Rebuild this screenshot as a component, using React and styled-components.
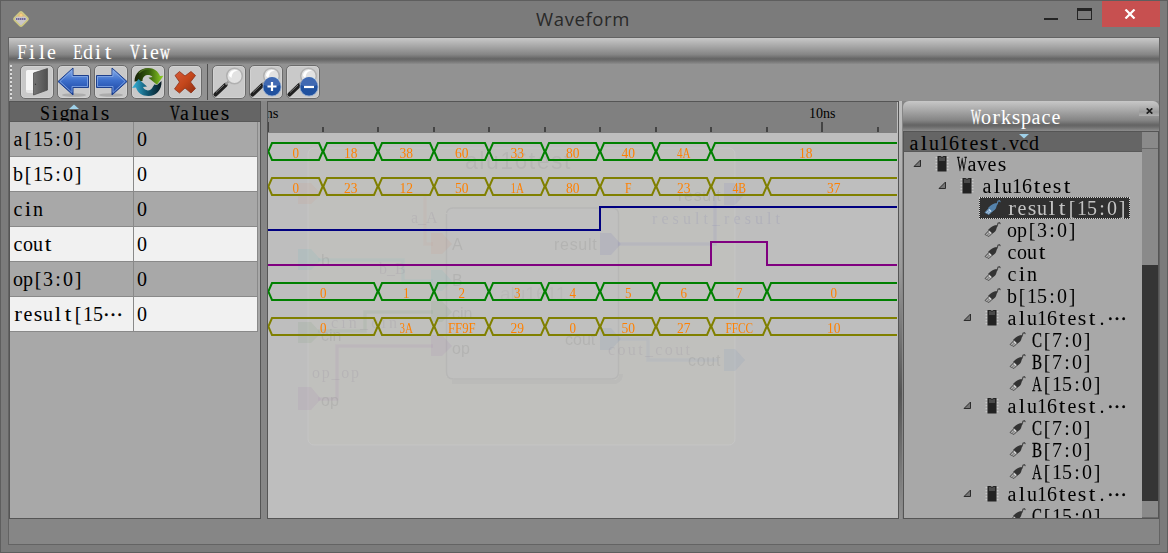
import React from 'react'
import styled, { createGlobalStyle, css } from 'styled-components'

const signals = [
    { name: 'a[15:0]', value: '0' },
    { name: 'b[15:0]', value: '0' },
    { name: 'cin', value: '0' },
    { name: 'cout', value: '0' },
    { name: 'op[3:0]', value: '0' },
    { name: 'result[15…', value: '0' },
]

const tree = [
    { level: 0, kind: 'chip', label: 'Waves' },
    { level: 1, kind: 'chip', label: 'alu16test' },
    { level: 2, kind: 'plug', label: 'result[15:0]', selected: true },
    { level: 2, kind: 'plug', label: 'op[3:0]' },
    { level: 2, kind: 'plug', label: 'cout' },
    { level: 2, kind: 'plug', label: 'cin' },
    { level: 2, kind: 'plug', label: 'b[15:0]' },
    { level: 2, kind: 'chip', label: 'alu16test.…' },
    { level: 3, kind: 'plug', label: 'C[7:0]' },
    { level: 3, kind: 'plug', label: 'B[7:0]' },
    { level: 3, kind: 'plug', label: 'A[15:0]' },
    { level: 2, kind: 'chip', label: 'alu16test.…' },
    { level: 3, kind: 'plug', label: 'C[7:0]' },
    { level: 3, kind: 'plug', label: 'B[7:0]' },
    { level: 3, kind: 'plug', label: 'A[15:0]' },
    { level: 2, kind: 'chip', label: 'alu16test.…' },
    { level: 3, kind: 'plug', label: 'C[15:0]' },
]

// x of every time step inside the wave canvas
const steps = [0, 55, 110, 166, 221, 277, 332, 388, 443, 499, 554, 610]
const END = 630

const buses = [
    { y: 41, color: '#008000', edges: [0, 1, 2, 3, 4, 5, 6, 7, 8], values: ['0', '18', '38', '60', '33', '80', '40', '4A', '18'] },
    { y: 76, color: '#808000', edges: [0, 1, 2, 3, 4, 5, 6, 7, 8, 9], values: ['0', '23', '12', '50', '1A', '80', 'F', '23', '4B', '37'] },
    { y: 181, color: '#008000', edges: [0, 2, 3, 4, 5, 6, 7, 8, 9], values: ['0', '1', '2', '3', '4', '5', '6', '7', '0'] },
    { y: 216, color: '#808000', edges: [0, 2, 3, 4, 5, 6, 7, 8, 9], values: ['0', '3A', 'FF9F', '29', '0', '50', '27', 'FFCC', '10'] },
]

// horizontal scale that makes each glyph fill one column
const scales = {
    W: 0.52, V: 0.68, A: 0.68, B: 0.75, C: 0.75, E: 0.8, F: 0.85, S: 0.9, w: 0.68,
    i: 1.15, l: 1.15, t: 1.2, r: 1.15, f: 1.1, s: 1.1,
}

const FixedText = ({ children }) => (
    <Fixed>
        {children.split('').map((c, i) => (
            <Cell key={i} $scale={scales[c]} $wide={c === '…'}>{c}</Cell>
        ))}
    </Fixed>
)

const AppIcon = () => (
    <svg width="18" height="18" viewBox="0 0 18 18">
        <rect x="3.6" y="3.6" width="10.8" height="10.8" rx="1.5" transform="rotate(45 9 9)" fill="#c9c5cb" stroke="#cdc882" strokeWidth="1.6" />
        <path d="M9 2.5l4 4H5z" fill="#e3b56c" />
        <circle cx="9" cy="5.2" r="1.4" fill="#f5cf83" />
        <path d="M4 9h10" stroke="#6f659c" strokeWidth="1.8" strokeDasharray="1.4 .5" />
    </svg>
)

const DoorIcon = () => (
    <svg width="32" height="32" viewBox="0 0 32 32">
        <path d="M5 5.5q0-1.5 1.5-1.5H20v20H6.500Q5 27 5 25z" fill="#f6f6f6" />
        <path d="M5 25q0 2 2 2h6v-3H5z" fill="#e6e6e6" />
        <path d="M12.500 7L26.500 2.500V24l-14 5z" fill="url(#door)" stroke="#505050" strokeWidth=".8" />
        <path d="M14 18.500l1-.4" stroke="#333" strokeWidth="1.200" />
        <defs>
            <linearGradient id="door" x1="0" y1="0" x2="1" y2="0">
                <stop offset="0" stopColor="#757575" />
                <stop offset="1" stopColor="#505050" />
            </linearGradient>
        </defs>
    </svg>
)

const ArrowIcon = ({ right }) => (
    <svg width="34" height="34" viewBox="0 0 34 34">
        <defs>
            <linearGradient id={right ? 'arr' : 'arl'} x1="0" y1="0" x2="0" y2="1">
                <stop offset="0" stopColor="#8fb4ee" />
                <stop offset=".45" stopColor="#3e70cc" />
                <stop offset="1" stopColor="#173f9c" />
            </linearGradient>
        </defs>
        <ellipse cx="17" cy="30" rx="12" ry="1.800" fill="#999" opacity=".6" />
        <g transform={right ? 'translate(34 0) scale(-1 1)' : undefined}>
            <path d="M1 16.500L16 3v7.500h15.500v12H16V30z" fill={right ? 'url(#arr)' : 'url(#arl)'} stroke="#1d3f8c" strokeWidth="1" />
            <path d="M3 16.500L15 5.500v6h15.500v10H15v6z" fill="none" stroke="#86a9e4" strokeWidth=".8" />
        </g>
    </svg>
)

const RefreshIcon = () => (
    <svg width="34" height="34" viewBox="0 0 34 34">
        <defs>
            <linearGradient id="green" x1="0" y1="0" x2="1" y2="0">
                <stop offset="0" stopColor="#152006" />
                <stop offset=".5" stopColor="#365d0c" />
                <stop offset="1" stopColor="#91d625" />
            </linearGradient>
            <linearGradient id="blue" x1="0" y1="0" x2="1" y2="0">
                <stop offset="0" stopColor="#39b5dc" />
                <stop offset=".5" stopColor="#125b76" />
                <stop offset="1" stopColor="#081a22" />
            </linearGradient>
        </defs>
        <path d="M3.500 16.500C3.500 8 10 3 17 3c6 0 10 3 12 8l3.500-.2-6.500 9-8.500-7 4-.9C18 8.500 11.500 10 11.500 16z" fill="url(#green)" />
        <path d="M30.500 16C31 25 25 31 17.500 31 11 31 6.500 27.500 5 22.500l-4 .5L7.500 14l8.500 7.500-4 .6c2 4.500 8 4.500 10-.6 0 0 1-1 1-2l3 .5z" fill="url(#blue)" />
        <path d="M8 8q5-5 11-4" stroke="#5b7f28" strokeWidth="1.200" fill="none" opacity=".7" />
    </svg>
)

const DeleteIcon = () => (
    <svg width="32" height="32" viewBox="0 0 32 32">
        <defs>
            <linearGradient id="red" x1="0" y1="0" x2="1" y2="1">
                <stop offset="0" stopColor="#d65a3b" />
                <stop offset=".5" stopColor="#c4471b" />
                <stop offset="1" stopColor="#8f2d11" />
            </linearGradient>
        </defs>
        <path d="M6 9.500L10.500 5.500l5.500 4.500L22 5.500l4.500 4-5 6.500 5 6.500-4.500 4.500-6-5-5.500 5L5.500 23l5-7z" fill="url(#red)" stroke="#8e3219" strokeWidth=".8" />
    </svg>
)

const LensIcon = ({ sign }) => (
    <svg width="34" height="34" viewBox="0 0 34 34">
        <path d="M3.500 29.500L13.500 20" stroke="#202020" strokeWidth="4.200" strokeLinecap="round" />
        <path d="M4 27.500l8-7.500" stroke="#777" strokeWidth="1" />
        <path d="M13.500 19.500l3.500-3.500" stroke="#999" strokeWidth="2" />
        <circle cx="22.500" cy="11" r="7.800" fill="#e2e2e2" stroke="#b0b0b0" strokeWidth="1.500" />
        <path d="M17 11a6 6 0 0 1 9-5.200C22 6 20 8 19.500 13z" fill="#fff" />
        {sign && (
            <g>
                <ellipse cx="24" cy="15" rx="6" ry="3" fill="#c2e0ef" />
                <circle cx="23" cy="22" r="9" fill="#20519f" stroke="#8ba7d1" strokeWidth=".8" />
                <path d="M15 20a8 8 0 0 1 16 0q-8 4-16 0z" fill="#4069b2" />
                <path d={sign === '+' ? 'M18.500 21.500h9M23 17v9' : 'M18 22h10'} stroke="#fff" strokeWidth="2.200" />
            </g>
        )}
    </svg>
)

const Chip = () => (
    <svg width="14" height="18" viewBox="0 0 14 18">
        <path d="M1.500 2v15M12.500 2v15" stroke="#c8c8c8" strokeWidth="2" strokeDasharray="1.200 1.800" />
        <path d="M2.500 1h3q1.500 1.600 3 0h3v15.500h-9z" fill="#222" />
        <path d="M4 2h1.500q1.500 1.500 3 0H10v4H4z" fill="#4a4a4a" />
    </svg>
)

const Plug = ({ tint }) => (
    <svg width="17" height="17" viewBox="0 0 17 17">
        <path d="M11 6.500q3-1 2.500-3 0-1.500 2-1.800.8.500.5 1.500" fill="none" stroke={tint || '#4a4a4a'} strokeWidth="1.200" />
        <path d="M4 9Q8 4.500 12.500 4q1 .8.300 2.500-.8 4.500-5 6.500z" fill={tint || '#333'} />
        <path d="M1 13.500l4-4.200 3.200 3-3.200 3.200z" fill={tint ? '#7ea4c9' : '#8c8c8c'} stroke={tint || '#4c4c4c'} strokeWidth=".9" />
        <path d="M5 10.500l2 2" stroke={tint ? '#c0d8ec' : '#ddd'} strokeWidth="1.200" />
        <path d="M2.500 13.500l1-1M4.200 14.500l1-1" stroke="#e0e0e0" strokeWidth=".9" />
    </svg>
)

const Expander = () => (
    <svg width="9" height="9" viewBox="0 0 9 9">
        <path d="M7.500 1v6.500H1z" fill="#757575" stroke="#2c2c2c" />
    </svg>
)

const SortMark = ({ down }) => (
    <svg width="10" height="5" viewBox="0 0 10 5">
        <path d={down ? 'M0 0h10L5 4.500z' : 'M0 5h10L5 .5z'} fill="#9fd0e8" />
    </svg>
)

// schematic window showing faintly through the canvas
const Ghost = () => (
    <g opacity=".5">
        <rect x="40" y="46" width="427" height="297" rx="6" fill="#c9c9bd" opacity=".5" stroke="#dcdcdc" strokeWidth="1" />
        <rect x="178.500" y="106" width="172" height="172" rx="6" fill="#c3c3c2" opacity=".6" />
        <path d="M178.500 112v158q0 7 7 7h158q7 0 7-7V112q0-6-7-6h-158q-6 0-7 5" fill="none" stroke="#a4a4a4" strokeWidth="1.500" opacity=".6" />
        <path d="M184 280h164q5-2 5-8" fill="none" stroke="#aaa" strokeWidth="4" opacity=".4" />
        <g fill="none" strokeWidth="3.500" opacity=".15">
            <path d="M50 92h107v50h8" stroke="#c98070" />
            <path d="M50 158h85v21h30" stroke="#40b8b8" />
            <path d="M50 229h47v-19h68" stroke="#408040" />
            <path d="M50 297h19v-53h96" stroke="#9050a0" />
            <path d="M350 142h97V94" stroke="#5050c0" />
            <path d="M350 237h30v21h70" stroke="#6080c0" />
        </g>
        <g opacity=".16">
            <path d="M30 81h13l10 11-10 10H30z" fill="#d07050" />
            <path d="M30 147h13l10 11-10 10H30z" fill="#30b0b8" />
            <path d="M30 220h13l10 11-10 10H30z" fill="#408040" />
            <path d="M30 285h13l10 12-10 11H30z" fill="#8a4a9c" />
            <path d="M163 131h11l10 11-10 10h-11z" fill="#d07050" />
            <path d="M163 168h11l10 11-10 10h-11z" fill="#30b0b8" />
            <path d="M163 199h11l10 11-10 10h-11z" fill="#408040" />
            <path d="M163 233h11l10 11-10 10h-11z" fill="#8a4a9c" />
            <path d="M332 131h11l10 11-10 11h-11z" fill="#4040b0" />
            <path d="M332 226h11l10 11-10 11h-11z" fill="#4070b0" />
            <path d="M456 81h11l10 11-10 11h-11z" fill="#4040b0" />
            <path d="M456 247h11l10 11-10 11h-11z" fill="#4070b0" />
        </g>
        <g fill="#505050" opacity=".22" fontFamily="Liberation Sans" fontSize="16">
            <text x="197" y="67" fontSize="23" letterSpacing="1.500" opacity=".8">alu16test</text>
            <text x="184" y="148">A</text>
            <text x="184" y="184">B</text>
            <text x="184" y="217">cin</text>
            <text x="184" y="252">op</text>
            <text x="286" y="148" letterSpacing=".7">result</text>
            <text x="297" y="243">cout</text>
            <text x="53" y="164">b</text>
            <text x="53" y="239">cin</text>
            <text x="53" y="304">op</text>
            <text x="410" y="99" letterSpacing=".7">result</text>
            <text x="420" y="264" letterSpacing=".7">cout</text>
            <text x="232" y="198" fontSize="19" opacity=".5">alu1611</text>
        </g>
        <g fill="#7a6a85" opacity=".25" fontFamily="Liberation Serif" fontSize="16">
            <text x="143" y="121">a_A</text>
            <text x="111" y="172">b_B</text>
            <text x="63" y="226" textLength="66">cin_cin</text>
            <text x="44" y="276" textLength="47">op_op</text>
            <text x="384" y="122" textLength="128" fill="#6262a8">result_result</text>
            <text x="340" y="253" textLength="82">cout_cout</text>
        </g>
    </g>
)

const Bus = ({ bus }) => {
    const { y, color, edges, values } = bus
    return (
        <g>
            {edges.map((e, i) => {
                const last = i === edges.length - 1
                const x1 = steps[e]
                const x2 = last ? END + 6 : steps[edges[i + 1]]
                const mid = last ? (x1 + END) / 2 + 1 : (x1 + x2) / 2
                const len = values[i].length * 7 - 0.5
                return (
                    <g key={e}>
                        <path
                            d={`M${x2 - 4} ${y}H${x1 + 4}L${x1 + 0.3} ${y + 8.5}L${x1 + 4} ${y + 17}H${x2 - 4}L${x2 - 0.3} ${y + 8.5}Z`}
                            fill="none"
                            stroke={color}
                            strokeWidth="2"
                        />
                        <WaveText x={mid - len / 2 + 0.3} y={y + 15} textLength={len} lengthAdjust="spacingAndGlyphs">{values[i]}</WaveText>
                    </g>
                )
            })}
        </g>
    )
}

const WaveCanvas = () => (
    <svg width="629" height="416" viewBox="0 0 629 416">
        <rect width="629" height="31" fill="#808080" />
        {steps.map((x) => {
            const major = x === 0 || x === 554
            return <rect key={x} x={x - 1} y={major ? 20 : 25} width="2" height={major ? 10 : 5} fill="#444" />
        })}
        <RulerText x="-10" y="15.500" textLength="20.500" lengthAdjust="spacingAndGlyphs">0ns</RulerText>
        <RulerText x="541" y="15.500" textLength="26.500" lengthAdjust="spacingAndGlyphs">10ns</RulerText>
        <Ghost />
        {buses.map((bus) => <Bus key={bus.y} bus={bus} />)}
        <path d="M0 128H332V105H630" fill="none" stroke="#000080" strokeWidth="2" />
        <path d="M0 163H443V140H499V163H630" fill="none" stroke="#800080" strokeWidth="2" />
    </svg>
)

const App = () => {
    return (
        <Window>
            <GlobalStyle />
            <TitleBar>
                <TitleIcon><AppIcon /></TitleIcon>
                <Title>Waveform</Title>
                <Controls>
                    <Minimize />
                    <Maximize />
                    <CloseButton>
                        <svg width="12" height="10" viewBox="0 0 12 10">
                            <path d="M1.500 .5l9 9M10.500 .5l-9 9" stroke="#fff" strokeWidth="2.200" />
                        </svg>
                    </CloseButton>
                </Controls>
            </TitleBar>

            <Frame>
                <MenuBar>
                    <FixedText>File</FixedText>
                    <FixedText>Edit</FixedText>
                    <FixedText>View</FixedText>
                </MenuBar>

                <ToolBar>
                    <Grip />
                    <ToolButton><DoorIcon /></ToolButton>
                    <ToolButton><ArrowIcon /></ToolButton>
                    <ToolButton><ArrowIcon right /></ToolButton>
                    <ToolButton><RefreshIcon /></ToolButton>
                    <ToolButton><DeleteIcon /></ToolButton>
                    <Separator />
                    <ToolButton><LensIcon /></ToolButton>
                    <ToolButton><LensIcon sign="+" /></ToolButton>
                    <ToolButton><LensIcon sign="-" /></ToolButton>
                </ToolBar>

                <Body>
                    <SignalPanel>
                        <SignalHead>
                            <HeadCell><FixedText>Signals</FixedText></HeadCell>
                            <HeadCell><FixedText>Values</FixedText></HeadCell>
                            <SortBadge $x={59}><SortMark /></SortBadge>
                        </SignalHead>
                        {signals.map((s, i) => (
                            <SignalRow key={s.name} $light={i % 2 === 1}>
                                <SignalCell><FixedText>{s.name}</FixedText></SignalCell>
                                <SignalCell><FixedText>{s.value}</FixedText></SignalCell>
                            </SignalRow>
                        ))}
                    </SignalPanel>

                    <WavePanel><WaveCanvas /></WavePanel>
                    <Splitter />

                    <Dock>
                        <DockTitle>
                            <FixedText>Workspace</FixedText>
                            <DockClose>
                                <svg width="7" height="6" viewBox="0 0 7 6">
                                    <path d="M.7 .3l5.600 5.400M6.300 .3L.7 5.700" stroke="#1d1d1d" strokeWidth="1.600" />
                                </svg>
                            </DockClose>
                        </DockTitle>
                        <DockBody>
                            <Tree>
                                <TreeHead>
                                    <FixedText>alu16test.vcd</FixedText>
                                    <SortBadge $x={115}><SortMark down /></SortBadge>
                                </TreeHead>
                                <TreeRows>
                                    {tree.map((n, i) => (
                                        <TreeRow key={i} $level={n.level}>
                                            <Arrow>{n.kind === 'chip' && <Expander />}</Arrow>
                                            <TreeItem $selected={n.selected}>
                                                <ItemIcon $kind={n.kind}>{n.kind === 'chip' ? <Chip /> : <Plug tint={n.selected ? '#5583ac' : undefined} />}</ItemIcon>
                                                <FixedText>{n.label}</FixedText>
                                            </TreeItem>
                                        </TreeRow>
                                    ))}
                                </TreeRows>
                            </Tree>
                            <ScrollBar>
                                <ScrollEnd />
                                <ScrollTrack />
                                <ScrollThumb />
                                <ScrollEnd />
                            </ScrollBar>
                        </DockBody>
                    </Dock>
                </Body>
            </Frame>
        </Window>
    )
}

export default App


const GlobalStyle = createGlobalStyle`
* {
    box-sizing: border-box;
}
body {
    margin: 0;
    overflow: hidden;
}
svg {
    display: block;
    flex: none;
}
`

const barGradient = css`
background: linear-gradient(#c8c8c8 0%, #a9a9a9 30%, #858585 64%, #646464 80%, #6c6c6c 86%, #8c8c8c 100%);
`

const Fixed = styled.span`
display: inline-flex;
flex: none;
font-family: "Liberation Serif", serif;
font-size: 20px;
line-height: 22px;
white-space: pre;
`

const Cell = styled.span`
display: flex;
justify-content: center;
width: ${(p) => (p.$wide ? 20 : 10)}px;
${(p) => p.$scale && `transform: scaleX(${p.$scale});`}
${(p) => p.$scale < 0.8 && '-webkit-text-stroke: 0.3px currentColor;'}
${(p) => p.$wide && 'transform: translateY(-5px); -webkit-text-stroke: 0.5px currentColor;'}
`

const Window = styled.div`
display: flex;
flex-direction: column;
width: 1168px;
height: 553px;
border: 1px solid #5e5e5e;
background: #7b7b7b;
padding: 0 7px;
`

const TitleBar = styled.div`
display: grid;
grid-template-columns: 1fr auto 1fr;
height: 36px;
flex: none;
`

const TitleIcon = styled.div`
padding: 9px 0 0 4px;
`

const Title = styled.div`
margin-right: 2px;
font-family: "Open Sans", sans-serif;
font-size: 18.500px;
line-height: 36px;
letter-spacing: 0.6px;
color: #292929;
`

const Controls = styled.div`
display: flex;
justify-content: flex-end;
`

const Minimize = styled.div`
width: 14px;
height: 2px;
margin: 17px 19px 0 0;
background: #242424;
`

const Maximize = styled.div`
width: 15px;
height: 12px;
margin: 7px 10px 0 0;
border: 1px solid #242424;
border-top-width: 3px;
`

const CloseButton = styled.div`
display: flex;
align-items: center;
justify-content: center;
width: 58px;
height: 26px;
padding-right: 2px;
background: #c75050;
`

const Frame = styled.div`
display: flex;
flex-direction: column;
flex: none;
height: 508px;
border: 1px solid #636363;
background: #868686;
`

const MenuBar = styled.div`
display: flex;
gap: 16.500px;
height: 26px;
flex: none;
padding: 3px 0 0 7.500px;
color: #fff;
${barGradient}
`

const ToolBar = styled.div`
display: flex;
align-items: flex-start;
gap: 3px;
height: 37px;
flex: none;
padding: 1px 0 0 1px;
background: #929292;
`

const Grip = styled.div`
width: 2px;
height: 34px;
margin-right: 5px;
background: repeating-linear-gradient(#dcdcdc 0 2px, #858585 2px 4px);
`

const ToolButton = styled.div`
display: flex;
align-items: center;
justify-content: center;
width: 34px;
height: 34px;
border: 1px solid #6b6b6b;
border-radius: 5px;
background: #c9c9c9;
box-shadow: inset 0 0 0 1px #d2d2d2;
`

const Separator = styled.div`
width: 1px;
height: 36px;
margin: -1px 1px 0 2px;
background: #505050;
`

const Body = styled.div`
display: flex;
flex: none;
height: 418px;
`

const SignalPanel = styled.div`
width: 252px;
margin-right: 6px;
flex: none;
border: 1px solid #555;
background: #a8a8a8;
`

const SignalHead = styled.div`
position: relative;
display: grid;
grid-template-columns: 124px 126px;
height: 20px;
background: #656565;
border-bottom: 1px solid #595959;
overflow: hidden;
`

const HeadCell = styled.div`
padding-left: 5px;
text-align: center;
`

const SortBadge = styled.div`
position: absolute;
top: 2px;
left: ${(p) => p.$x}px;
`

const SignalRow = styled.div`
display: grid;
grid-template-columns: 124px 124px;
width: 248px;
height: 35px;
background: ${(p) => (p.$light ? '#f1f1f1' : '#a8a8a8')};
`

const SignalCell = styled.div`
display: flex;
align-items: center;
padding: 0 0 0 3px;
border-right: 1px solid #898989;
border-bottom: 1px solid #898989;
`

const WavePanel = styled.div`
width: 632px;
flex: none;
overflow: hidden;
border: 1px solid #555;
background: #bebebe;
`

const Splitter = styled.div`
width: 3px;
margin-right: 1px;
background: linear-gradient(#c0c0c0, #9a9a9a 40%, #555 70%, #909090);
`

const Dock = styled.div`
display: flex;
flex-direction: column;
flex: 1;
`

const DockTitle = styled.div`
display: flex;
position: relative;
justify-content: center;
height: 30px;
padding: 5px 30px 0 0;
border-radius: 6px 6px 0 0;
color: #fff;
${barGradient}
`

const DockClose = styled.div`
display: flex;
position: absolute;
top: 5px;
right: 0;
align-items: center;
justify-content: center;
width: 20px;
height: 10px;
background: linear-gradient(#b6b6b6, #9a9a9a 60%, #b0b0b0);
`

const DockBody = styled.div`
display: flex;
flex: 1;
min-height: 0;
border: 1px solid #555;
`

const Tree = styled.div`
flex: 1;
overflow: hidden;
background: #a8a8a8;
`

const TreeHead = styled.div`
position: relative;
height: 20px;
padding-left: 5px;
overflow: hidden;
background: #656565;
border-bottom: 1px solid #595959;
`

const TreeRows = styled.div`
padding-top: 1px;
`

const TreeRow = styled.div`
display: flex;
height: 22px;
padding-left: ${(p) => p.$level * 25}px;
`

const Arrow = styled.div`
display: flex;
width: 25px;
padding: 6px 0 0 9px;
`

const TreeItem = styled.div`
display: flex;
flex: none;
height: 22px;
padding-right: 3px;
${(p) => p.$selected && `
color: #c4c4c4;
background: #303030;
outline: 1px dotted #d0d0d0;
outline-offset: -1px;
`}
`

const ItemIcon = styled.div`
display: flex;
align-items: center;
justify-content: center;
width: 28px;
padding: ${(p) => (p.$kind === 'chip' ? '0 2px 0 0' : '0 1px 1px 0')};
`

const ScrollBar = styled.div`
display: flex;
flex-direction: column;
width: 16px;
background: #8a8a8a;
`

const ScrollEnd = styled.div`
height: 17px;
border-bottom: 1px solid #6a6a6a;
`

const ScrollTrack = styled.div`
flex: 1;
`

const ScrollThumb = styled.div`
height: 236px;
background: #353535;
`

const WaveText = styled.text`
font-family: "Liberation Serif", serif;
font-size: 14px;
fill: #ff8000;
`

const RulerText = styled.text`
font-family: "Liberation Serif", serif;
font-size: 14px;
fill: #000;
`
